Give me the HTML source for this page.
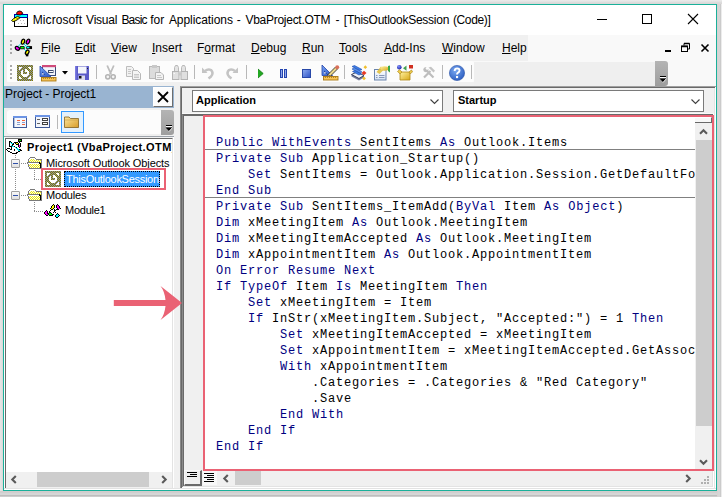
<!DOCTYPE html>
<html><head><meta charset="utf-8">
<style>
*{box-sizing:border-box}
html,body{margin:0;padding:0}
body{width:722px;height:497px;overflow:hidden;position:relative;background:#d9d9d9;font-family:"Liberation Sans",sans-serif;font-size:12px;color:#000}
.a{position:absolute}
svg.a{overflow:visible}
.t{position:absolute;white-space:pre;line-height:14px}
.u{text-decoration:underline;text-underline-offset:1px}
#code{position:absolute;left:205px;top:117px;width:490px;height:352px;overflow:hidden;background:#fff}
#code .ln{position:absolute;left:11px;margin-top:2px;white-space:pre;font-family:"Liberation Mono",monospace;font-size:12px;letter-spacing:0.8px;line-height:16px;height:16px;color:#000}
#code .k{color:#00007f}
.sep{position:absolute;left:0;width:490px;height:1px;background:#808080}
.dots{position:absolute;background-image:linear-gradient(#8c8c8c,#8c8c8c);}
</style></head>
<body>
<!-- shadow -->
<div class="a" style="left:0;top:0;width:722px;height:4px;background:linear-gradient(to bottom,#ebebeb,#e3e3e3 40%,#d9d9d9 75%,#ded8d8)"></div>
<div class="a" style="left:0;top:4px;width:3px;height:487px;background:linear-gradient(to right,#e6e6e6,#e1e1e1 50%,#dcd6d6)"></div>
<div class="a" style="left:717px;top:4px;width:5px;height:493px;background:linear-gradient(to right,#d8d2d2 0 1px,#d6d6d6 1px 3px,#cbcbcb 3px 4px,#ececec 4px)"></div>
<div class="a" style="left:0;top:491px;width:717px;height:6px;background:linear-gradient(to bottom,#d4cdcd 0 1px,#cfcfcf 1px 2px,#d6d6d6 2px 4px,#bebebe 4px 5px,#cdcdcd 5px)"></div>
<!-- window -->
<div class="a" style="left:3px;top:4px;width:714px;height:487px;border:1px solid #1ab09a;background:#f0f0f0"></div>
<!-- title bar -->
<div class="a" style="left:4px;top:5px;width:712px;height:30px;background:#fff"></div>
<svg class="a" style="left:11px;top:10px" width="18" height="18" viewBox="0 0 18 18">
  <rect x="3.5" y="4.5" width="13" height="12" fill="#fff" stroke="#000"/>
  <rect x="3.5" y="4.5" width="13" height="3" fill="#00ffff" stroke="#0000a0"/>
  <g fill="#b8b8b8"><rect x="9" y="10" width="1" height="1"/><rect x="12" y="10" width="1" height="1"/><rect x="7" y="13" width="1" height="1"/><rect x="10" y="13" width="1" height="1"/><rect x="13" y="13" width="1" height="1"/></g>
  <path d="M5.5 3.2 Q6 1.2 8.5 1 Q11 1 11.8 3.4 Q9.5 5.8 6.2 4.6Z" fill="#ff0000" stroke="#000" stroke-width="0.9"/>
  <path d="M0.6 10.6 L2.5 8.6 L6.5 6.4 L9.2 7.6 L5.5 10.4 L2 11.6 Z" fill="#ffff00" stroke="#000" stroke-width="0.9"/>
  <path d="M5.2 8.6 L7.8 7.4 L8.4 8.4 L5.6 10Z" fill="#808000"/>
</svg>
<div class="t" style="left:32.8px;top:13px;letter-spacing:0.07px">Microsoft</div><div class="t" style="left:86.1px;top:13px;letter-spacing:-0.24px">Visual</div><div class="t" style="left:121.4px;top:13px;letter-spacing:-0.8px">Basic</div><div class="t" style="left:150.2px;top:13px">for</div><div class="t" style="left:168.9px;top:13px;letter-spacing:-0.06px">Applications</div><div class="t" style="left:236.7px;top:13px">-</div><div class="t" style="left:245.5px;top:13px;letter-spacing:-0.28px">VbaProject.OTM</div><div class="t" style="left:335.5px;top:13px">-</div><div class="t" style="left:343.8px;top:13px;letter-spacing:-0.25px">[ThisOutlookSession</div><div class="t" style="left:452.9px;top:13px;letter-spacing:-0.35px">(Code)]</div>
<!-- window controls -->
<div class="a" style="left:597px;top:19px;width:10px;height:1px;background:#000"></div>
<div class="a" style="left:642px;top:14px;width:10px;height:10px;border:1px solid #000"></div>
<svg class="a" style="left:688px;top:14px" width="10" height="10"><path d="M0 0L10 10M10 0L0 10" stroke="#000" stroke-width="1.1"/></svg>

<!-- menu bar -->
<div class="a" style="left:4px;top:35px;width:712px;height:51px;background:#f9f9f9"></div>
<div class="a" style="left:4px;top:35px;width:524px;height:26px;background:#f0f0f0"></div>
<div class="a" style="left:4px;top:61px;width:3px;height:25px;background:#f0f0f0"></div>
<div class="a" style="left:4px;top:82px;width:472px;height:4px;background:#f0f0f0"></div>
<div class="a" style="left:10px;top:40px;width:2px;height:2px;background:#a8a8a8;box-shadow:0 4px #a8a8a8,0 8px #a8a8a8,0 12px #a8a8a8"></div>
<svg class="a" style="left:14px;top:38px" width="19" height="19" viewBox="0 0 19 19">
  <g stroke="#000" stroke-width="1.3">
  <ellipse cx="9" cy="3.7" rx="1.5" ry="2.6" transform="rotate(20 9 3.7)" fill="#ffff00"/>
  <ellipse cx="14" cy="3.7" rx="1.5" ry="2.6" transform="rotate(25 14 3.7)" fill="#ff00ff"/>
  <ellipse cx="3.4" cy="10.3" rx="2.3" ry="1.7" transform="rotate(35 3.4 10.3)" fill="#ff00ff"/>
  <rect x="6.6" y="8.4" width="3.6" height="2.4" fill="#00ff00" stroke-width="0.8"/>
  <path d="M12.4 8.4 H16.2 V10.6 H12.4Z" fill="#00ffff" stroke-width="0.8"/>
  <rect x="16.2" y="8.8" width="1.2" height="1.6" fill="#000"/>
  <ellipse cx="13.2" cy="14.3" rx="1.5" ry="2.4" transform="rotate(30 13.2 14.3)" fill="#ffff00"/>
  <rect x="12.5" y="16.5" width="1.2" height="1.2" fill="#000"/>
  </g>
  <g fill="#00e0e0">
  <rect x="4" y="7.5" width="1" height="1"/><rect x="5" y="6.5" width="1" height="1"/><rect x="6" y="5.5" width="1" height="1"/>
  <rect x="10" y="6" width="1" height="1"/><rect x="11" y="7" width="1" height="1"/><rect x="12" y="6" width="1" height="1"/><rect x="10" y="8" width="1" height="1"/><rect x="12" y="8" width="1" height="1"/>
  <rect x="10" y="11" width="1" height="1"/><rect x="11" y="12" width="1" height="1"/>
  </g>
</svg>
<div class="t" style="left:41px;top:41px"><span class="u">F</span>ile</div>
<div class="t" style="left:75px;top:41px"><span class="u">E</span>dit</div>
<div class="t" style="left:111px;top:41px"><span class="u">V</span>iew</div>
<div class="t" style="left:152px;top:41px"><span class="u">I</span>nsert</div>
<div class="t" style="left:197px;top:41px">F<span class="u">o</span>rmat</div>
<div class="t" style="left:251px;top:41px"><span class="u">D</span>ebug</div>
<div class="t" style="left:302px;top:41px"><span class="u">R</span>un</div>
<div class="t" style="left:339px;top:41px"><span class="u">T</span>ools</div>
<div class="t" style="left:384px;top:41px"><span class="u">A</span>dd-Ins</div>
<div class="t" style="left:442px;top:41px"><span class="u">W</span>indow</div>
<div class="t" style="left:502px;top:41px"><span class="u">H</span>elp</div>
<!-- mdi controls -->
<div class="a" style="left:665px;top:50px;width:6px;height:2px;background:#000"></div>
<svg class="a" style="left:681px;top:43px" width="9" height="9"><path d="M3 2.5V0.5H8.5V6H6.5" fill="none" stroke="#000" stroke-width="1"/><path d="M3 0.5H8.5" stroke="#000" stroke-width="1.5"/><rect x="0.5" y="3" width="6" height="5.5" fill="none" stroke="#000"/><path d="M0.5 3.5H6.5" stroke="#000" stroke-width="1.5"/></svg>
<svg class="a" style="left:701px;top:44px" width="8" height="8"><path d="M0.5 0.5L7.5 7.5M7.5 0.5L0.5 7.5" stroke="#000" stroke-width="1.6"/></svg>

<!-- main toolbar -->
<div class="a" style="left:7px;top:61px;width:467px;height:21px;background:#fcfcfc;border-radius:3px"></div>
<div class="a" style="left:474px;top:62px;width:186px;height:24px;background:#efefef;border-radius:0 4px 0 0"></div>
<div class="a" style="left:655px;top:61px;width:13px;height:25px;background:linear-gradient(#b4b4b4,#9e9e9e);border-radius:0 3px 3px 0"></div>
<div class="a" style="left:660px;top:76px;width:6px;height:1px;background:#000;box-shadow:0 1px #fff"></div>
<svg class="a" style="left:659px;top:78px" width="8" height="5"><path d="M0.5 0.5H7.5L4 4Z" fill="#000"/><path d="M7.5 0.5L4 4.5" stroke="#fff" stroke-width="0.8"/></svg>
<!-- grip -->
<div class="a" style="left:10px;top:65px;width:2px;height:2px;background:#a8a8a8;box-shadow:0 4px #a8a8a8,0 8px #a8a8a8,0 12px #a8a8a8"></div>
<!-- outlook icon -->
<svg class="a" style="left:17px;top:65px" width="16" height="16" viewBox="0 0 16 16" shape-rendering="crispEdges"><rect width="16" height="16" fill="#fff"/><path fill="#808000" d="M0 0h1v1h-1zM2 0h1v1h-1zM4 0h1v1h-1zM6 0h1v1h-1zM8 0h1v1h-1zM10 0h1v1h-1zM12 0h1v1h-1zM14 0h1v1h-1zM1 1h1v1h-1zM3 1h1v1h-1zM5 1h1v1h-1zM7 1h1v1h-1zM9 1h1v1h-1zM11 1h1v1h-1zM13 1h1v1h-1zM15 1h1v1h-1zM0 2h1v1h-1zM6 2h1v1h-1zM8 2h1v1h-1zM10 2h1v1h-1zM14 2h1v1h-1zM1 3h1v1h-1zM5 3h1v1h-1zM7 3h1v1h-1zM9 3h1v1h-1zM11 3h1v1h-1zM15 3h1v1h-1zM0 4h1v1h-1zM4 4h1v1h-1zM6 4h1v1h-1zM10 4h1v1h-1zM12 4h1v1h-1zM14 4h1v1h-1zM1 5h1v1h-1zM3 5h1v1h-1zM7 5h1v1h-1zM11 5h1v1h-1zM13 5h1v1h-1zM15 5h1v1h-1zM0 6h1v1h-1zM2 6h1v1h-1zM6 6h1v1h-1zM12 6h1v1h-1zM14 6h1v1h-1zM1 7h1v1h-1zM3 7h1v1h-1zM7 7h1v1h-1zM9 7h1v1h-1zM13 7h1v1h-1zM15 7h1v1h-1zM0 8h1v1h-1zM2 8h1v1h-1zM6 8h1v1h-1zM8 8h1v1h-1zM12 8h1v1h-1zM14 8h1v1h-1zM1 9h1v1h-1zM3 9h1v1h-1zM13 9h1v1h-1zM15 9h1v1h-1zM0 10h1v1h-1zM2 10h1v1h-1zM4 10h1v1h-1zM12 10h1v1h-1zM14 10h1v1h-1zM1 11h1v1h-1zM3 11h1v1h-1zM5 11h1v1h-1zM11 11h1v1h-1zM15 11h1v1h-1zM0 12h1v1h-1zM4 12h1v1h-1zM6 12h1v1h-1zM8 12h1v1h-1zM10 12h1v1h-1zM14 12h1v1h-1zM1 13h1v1h-1zM5 13h1v1h-1zM7 13h1v1h-1zM9 13h1v1h-1zM15 13h1v1h-1zM0 14h1v1h-1zM2 14h1v1h-1zM4 14h1v1h-1zM6 14h1v1h-1zM8 14h1v1h-1zM10 14h1v1h-1zM12 14h1v1h-1zM14 14h1v1h-1zM1 15h1v1h-1zM3 15h1v1h-1zM5 15h1v1h-1zM7 15h1v1h-1zM9 15h1v1h-1zM11 15h1v1h-1zM13 15h1v1h-1zM15 15h1v1h-1z"/><path fill="#8c8ca4" d="M1 0h1v1h-1zM3 0h1v1h-1zM5 0h1v1h-1zM7 0h1v1h-1zM9 0h1v1h-1zM11 0h1v1h-1zM13 0h1v1h-1zM15 0h1v1h-1zM0 1h1v1h-1zM2 1h1v1h-1zM4 1h1v1h-1zM6 1h1v1h-1zM8 1h1v1h-1zM10 1h1v1h-1zM12 1h1v1h-1zM14 1h1v1h-1zM1 2h1v1h-1zM5 2h1v1h-1zM7 2h1v1h-1zM9 2h1v1h-1zM15 2h1v1h-1zM0 3h1v1h-1zM4 3h1v1h-1zM6 3h1v1h-1zM8 3h1v1h-1zM10 3h1v1h-1zM14 3h1v1h-1zM1 4h1v1h-1zM3 4h1v1h-1zM5 4h1v1h-1zM7 4h1v1h-1zM11 4h1v1h-1zM15 4h1v1h-1zM0 5h1v1h-1zM2 5h1v1h-1zM4 5h1v1h-1zM6 5h1v1h-1zM12 5h1v1h-1zM14 5h1v1h-1zM1 6h1v1h-1zM3 6h1v1h-1zM7 6h1v1h-1zM13 6h1v1h-1zM15 6h1v1h-1zM0 7h1v1h-1zM2 7h1v1h-1zM6 7h1v1h-1zM8 7h1v1h-1zM12 7h1v1h-1zM14 7h1v1h-1zM1 8h1v1h-1zM3 8h1v1h-1zM7 8h1v1h-1zM9 8h1v1h-1zM13 8h1v1h-1zM15 8h1v1h-1zM0 9h1v1h-1zM2 9h1v1h-1zM12 9h1v1h-1zM14 9h1v1h-1zM1 10h1v1h-1zM3 10h1v1h-1zM11 10h1v1h-1zM13 10h1v1h-1zM15 10h1v1h-1zM0 11h1v1h-1zM4 11h1v1h-1zM10 11h1v1h-1zM12 11h1v1h-1zM14 11h1v1h-1zM1 12h1v1h-1zM5 12h1v1h-1zM7 12h1v1h-1zM9 12h1v1h-1zM11 12h1v1h-1zM15 12h1v1h-1zM0 13h1v1h-1zM6 13h1v1h-1zM8 13h1v1h-1zM10 13h1v1h-1zM14 13h1v1h-1zM1 14h1v1h-1zM3 14h1v1h-1zM5 14h1v1h-1zM7 14h1v1h-1zM9 14h1v1h-1zM11 14h1v1h-1zM13 14h1v1h-1zM15 14h1v1h-1zM0 15h1v1h-1zM2 15h1v1h-1zM4 15h1v1h-1zM6 15h1v1h-1zM8 15h1v1h-1zM10 15h1v1h-1zM12 15h1v1h-1zM14 15h1v1h-1z"/></svg>
<!-- userform icon -->
<svg class="a" style="left:38px;top:63px" width="20" height="20" viewBox="0 0 20 20">
  <defs><linearGradient id="sq" x1="0" y1="0" x2="1" y2="1"><stop offset="0" stop-color="#7aa4f4"/><stop offset="1" stop-color="#2a58c8"/></linearGradient></defs>
  <rect x="4.5" y="2.5" width="13" height="10" fill="#f2f5fc" stroke="#3c4c78"/>
  <rect x="4" y="2" width="14" height="2.2" fill="#d04a7a"/>
  <rect x="10.5" y="7.5" width="4.5" height="2" fill="#fff" stroke="#3c4a70"/>
  <path d="M2 3 V13.5 H13 Z" fill="url(#sq)" stroke="#2444a8" stroke-width="0.8"/>
  <path d="M4 8.5 V11.8 H7.3 Z" fill="#1c3c98"/>
  <circle cx="4.9" cy="10.9" r="0.8" fill="#fff"/>
  <rect x="3.5" y="14.5" width="14.5" height="3.5" fill="#f8c458" stroke="#a87812" stroke-width="0.9"/>
  <path d="M5.5 14.5v1.4M7.5 14.5v1.4M9.5 14.5v1.4M11.5 14.5v1.4M13.5 14.5v1.4M15.5 14.5v1.4" stroke="#a87812" stroke-width="0.9"/>
</svg>
<svg class="a" style="left:62px;top:71px" width="6" height="4"><path d="M0 0H6L3 3.5Z" fill="#000"/></svg>
<!-- save -->
<svg class="a" style="left:75px;top:66px" width="14" height="14" viewBox="0 0 14 14">
  <rect x="0" y="0" width="14" height="14" rx="0.5" fill="#5b5bc8"/>
  <rect x="0" y="0" width="1.5" height="14" fill="#7b7be0"/>
  <rect x="3" y="0.5" width="8.5" height="7" fill="#f4f6fb"/>
  <rect x="3.5" y="9.5" width="6.5" height="4.5" fill="#dcdcec"/>
  <rect x="4" y="10" width="2.5" height="2.5" fill="#111"/>
  <rect x="12" y="2" width="1" height="1" fill="#222"/>
</svg>
<div class="a" style="left:96px;top:65px;width:1px;height:14px;background:#b8b8b8"></div>
<!-- cut -->
<svg class="a" style="left:105px;top:65px" width="11" height="15" viewBox="0 0 11 15">
  <path d="M2.2 0.5 L6.2 9.5 M8.8 0.5 L4.8 9.5" stroke="#bdbdbd" stroke-width="1.8" fill="none"/>
  <circle cx="2.8" cy="11.8" r="2.1" fill="#f4f4f4" stroke="#b4b4b4" stroke-width="1.5"/>
  <circle cx="8.2" cy="11.8" r="2.1" fill="#f4f4f4" stroke="#b4b4b4" stroke-width="1.5"/>
</svg>
<!-- copy -->
<svg class="a" style="left:126px;top:66px" width="16" height="14" viewBox="0 0 16 14">
  <path d="M0.5 0.5H5.5L7.5 2.5V10.5H0.5Z" fill="#f2f2f2" stroke="#bdbdbd"/>
  <path d="M6.5 4.5H11.5L14.5 7.5V13.5H6.5Z" fill="#f4f4f4" stroke="#b8b8b8"/>
  <path d="M2 3.5H5M2 5.5H5M2 7.5H5M8 8.5H13M8 10H13M8 11.5H13" stroke="#c8c8c8"/>
</svg>
<!-- paste -->
<svg class="a" style="left:149px;top:65px" width="16" height="15" viewBox="0 0 16 15">
  <rect x="0.5" y="1.5" width="10" height="12" fill="#dcdcdc" stroke="#b8b8b8"/>
  <rect x="3" y="0" width="5" height="3" fill="#c8c8c8"/>
  <path d="M6.5 7.5H12L14.5 10V14.5H6.5Z" fill="#f2f2f2" stroke="#b4b4b4"/>
  <path d="M8 10.5H12M8 12.5H13" stroke="#c8c8c8"/>
</svg>
<!-- find -->
<svg class="a" style="left:172px;top:65px" width="16" height="15" viewBox="0 0 16 15">
  <path d="M2.5 2.5 L3.5 0.5 H5.5 L6.5 2.5 V6.5 H2.5Z" fill="#e4e4e4" stroke="#b8b8b8"/>
  <path d="M9.5 2.5 L10.5 0.5 H12.5 L13.5 2.5 V6.5 H9.5Z" fill="#e4e4e4" stroke="#b8b8b8"/>
  <rect x="0.5" y="6.5" width="6.5" height="8" fill="#e0e0e0" stroke="#b4b4b4"/>
  <rect x="9" y="6.5" width="6.5" height="8" fill="#e0e0e0" stroke="#b4b4b4"/>
  <rect x="7" y="7.5" width="2" height="3" fill="#c8c8c8"/>
  <path d="M1.5 8.5H3" stroke="#f8f8f8"/>
</svg>
<div class="a" style="left:194px;top:65px;width:1px;height:14px;background:#b8b8b8"></div>
<!-- undo / redo -->
<svg class="a" style="left:202px;top:67px" width="13" height="12" viewBox="0 0 13 12">
  <path d="M3 4 Q6 1.5 9 3 Q12 6 9 9.5 L6.5 11.5" fill="none" stroke="#c4c4c4" stroke-width="2.5"/>
  <path d="M0 0.5 V6 H5.5Z" fill="#c4c4c4"/>
</svg>
<svg class="a" style="left:225px;top:67px" width="13" height="12" viewBox="0 0 13 12">
  <path d="M10 4 Q7 1.5 4 3 Q1 6 4 9.5 L6.5 11.5" fill="none" stroke="#c4c4c4" stroke-width="2.5"/>
  <path d="M13 0.5 V6 H7.5Z" fill="#c4c4c4"/>
</svg>
<div class="a" style="left:246px;top:65px;width:1px;height:14px;background:#b8b8b8"></div>
<!-- run/break/reset -->
<svg class="a" style="left:258px;top:69px" width="6" height="9"><path d="M0 0L5.2 4.5L0 9Z" fill="#22a822"/><path d="M0 0L5.2 4.5L0 9" fill="none" stroke="#0c7a0c" stroke-width="0.8"/></svg>
<div class="a" style="left:280px;top:69px;width:3px;height:9px;background:linear-gradient(to right,#c0d0f8,#5c80e0);border:1px solid #2444b0"></div>
<div class="a" style="left:284px;top:69px;width:3px;height:9px;background:linear-gradient(to right,#c0d0f8,#5c80e0);border:1px solid #2444b0"></div>
<div class="a" style="left:302px;top:69px;width:9px;height:9px;background:linear-gradient(135deg,#8aa8ee,#3257c8);border:1px solid #2848a8"></div>
<!-- design mode -->
<svg class="a" style="left:318px;top:62px" width="24" height="22" viewBox="0 0 24 22">
  <path d="M4 3 V13.5 H14.5 Z" fill="url(#sq)" stroke="#2444a8" stroke-width="0.8"/>
  <path d="M6 8.5 V11.8 H9.3 Z" fill="#1c3c98"/>
  <circle cx="6.9" cy="10.9" r="0.8" fill="#fff"/>
  <path d="M10 12.5 L17.5 5 L19.5 7 L12 14.5 Z" fill="#ecd88a" stroke="#1a1a1a" stroke-width="0.8"/>
  <path d="M10 12.5 L12 14.5 L9.5 15Z" fill="#fff" stroke="#1a1a1a" stroke-width="0.6"/>
  <circle cx="19.2" cy="5.3" r="2" fill="#d8705a"/>
  <rect x="5.5" y="14.5" width="14.5" height="3.5" fill="#f8c458" stroke="#a87812" stroke-width="0.9"/>
  <path d="M7.5 14.5v1.4M9.5 14.5v1.4M11.5 14.5v1.4M13.5 14.5v1.4M15.5 14.5v1.4M17.5 14.5v1.4" stroke="#a87812" stroke-width="0.9"/>
</svg>
<div class="a" style="left:344px;top:65px;width:1px;height:14px;background:#b8b8b8"></div>
<!-- project explorer -->
<svg class="a" style="left:351px;top:65px" width="17" height="16" viewBox="0 0 17 16">
  <path d="M0.5 9.5 L0.5 11.5 L8 15.5 L13 12.5 L13 10.5 Z" fill="#7880a0"/>
  <path d="M0.5 9.5 L6 7 L13 10.5 L8 13.5 Z" fill="#eef1f8" stroke="#2c3450" stroke-width="0.9"/>
  <path d="M1 1.5 L3.5 0.5 L11 4.5 L8.5 5.5Z" fill="#3c7ce6" stroke="#1c4cb0" stroke-width="0.6"/>
  <path d="M1 4 L3.5 3 L11 7 L8.5 8Z" fill="#5a94f0" stroke="#1c4cb0" stroke-width="0.6"/>
  <path d="M1.5 6.5 L4 5.5 L10.5 9 L8 10Z" fill="#3c7ce6" stroke="#1c4cb0" stroke-width="0.6"/>
  <path d="M10.5 8 L13 5.8 L15.5 8 L13 10.2Z" fill="#e83a24"/>
  <path d="M12.5 2.2 L14.3 0.3 L16.2 2.2 L14.3 4.1Z" fill="#f0c030"/>
  <path d="M11.2 13.4 L13 11.5 L14.9 13.4 L13 15.3Z" fill="#f0c030"/>
</svg>
<!-- properties -->
<svg class="a" style="left:373px;top:65px" width="18" height="16" viewBox="0 0 18 16">
  <defs><linearGradient id="pw" x1="0" y1="0" x2="0" y2="1"><stop offset="0" stop-color="#ffffff"/><stop offset="1" stop-color="#d4e2f4"/></linearGradient>
  <linearGradient id="bx" x1="0" y1="0" x2="1" y2="1"><stop offset="0" stop-color="#fff2a0"/><stop offset="1" stop-color="#d8a818"/></linearGradient></defs>
  <rect x="1.5" y="4.5" width="11.5" height="10.5" fill="url(#pw)" stroke="#6a84ac"/>
  <path d="M3 10.5H4.5M6 10.5H11.5M3 12.5H4.5M6 12.5H11.5" stroke="#8898b8"/>
  <path d="M3.5 7 L8 1.5 L11 4.5 L6.5 9Z" fill="#e0c040" opacity="0.9"/>
  <ellipse cx="11.5" cy="3.5" rx="4" ry="2.2" fill="url(#bx)"/>
  <path d="M15 1 L17 0.5 V7.5 L15 6Z" fill="#38a848"/>
</svg>
<!-- object browser -->
<svg class="a" style="left:396px;top:64px" width="18" height="17" viewBox="0 0 18 17">
  <defs><radialGradient id="bb" cx="40%" cy="35%" r="70%"><stop offset="0" stop-color="#8090ff"/><stop offset="1" stop-color="#1820a0"/></radialGradient></defs>
  <circle cx="3.3" cy="3.2" r="2.3" fill="url(#bb)"/>
  <path d="M10.5 1.5 L7 4.2 L10.5 6.8Z" fill="#40a050"/>
  <rect x="13" y="1" width="4" height="3.5" fill="#d03020"/>
  <path d="M4 8 H14 V16 H4Z" fill="url(#bx)" stroke="#b08818" stroke-width="0.8"/>
  <path d="M1.5 7.5 L3.5 5.8 L6 8 L4 9.8Z" fill="#f0d050" stroke="#b08818" stroke-width="0.7"/>
  <path d="M13 8 L15.5 6 L16.5 8 L14 9.8Z" fill="#f0d050" stroke="#b08818" stroke-width="0.7"/>
</svg>
<!-- toolbox disabled -->
<svg class="a" style="left:422px;top:66px" width="14" height="13" viewBox="0 0 14 13">
  <path d="M2 11.5 L8.5 5 M11.5 11.5 L5 5" stroke="#bdbdbd" stroke-width="2.2"/>
  <path d="M1.2 3.5 Q1.5 0.8 4.5 1 L3.5 2.5 L5 4 L6.5 3 Q6.8 6 3.8 6.2 Q1.3 6 1.2 3.5Z" fill="#bdbdbd"/>
  <path d="M6.5 1.5 L9 0.8 L13 4.8 L11.5 6.5 L9.5 4.5 Z" fill="#c4c4c4"/>
</svg>
<div class="a" style="left:442px;top:65px;width:1px;height:14px;background:#b8b8b8"></div>
<!-- help -->
<svg class="a" style="left:449px;top:65px" width="16" height="16" viewBox="0 0 16 16">
  <defs><radialGradient id="hg" cx="40%" cy="35%" r="70%"><stop offset="0" stop-color="#7aa8f0"/><stop offset="1" stop-color="#2a5cc0"/></radialGradient></defs>
  <circle cx="8" cy="8" r="7.6" fill="url(#hg)" stroke="#2c54a8" stroke-width="0.6"/>
  <path d="M5.6 6 Q5.8 3.4 8.2 3.4 Q10.6 3.5 10.5 5.6 Q10.4 7 8.8 7.8 Q8 8.3 8 9.6" fill="none" stroke="#fff" stroke-width="1.9"/>
  <rect x="7" y="11" width="2.1" height="2.1" fill="#fff"/>
</svg>
<div class="a" style="left:471px;top:65px;width:1px;height:14px;background:#b8b8b8"></div>

<!-- project pane -->
<div class="a" style="left:4px;top:86px;width:170px;height:22px;background:#99b4d1"></div>
<div class="t" style="left:5px;top:87px;letter-spacing:-0.05px">Project - Project1</div>
<div class="a" style="left:153px;top:87px;width:20px;height:20px;background:#fcfcfc;border:1px solid;border-color:#fff #6e6e6e #6e6e6e #fff"></div>
<svg class="a" style="left:157px;top:91px" width="12" height="12"><path d="M1 1L11 11M11 1L1 11" stroke="#000" stroke-width="1.8"/></svg>
<div class="a" style="left:7px;top:110px;width:155px;height:24px;background:#fcfcfc;border-radius:3px"></div>
<div class="a" style="left:161px;top:110px;width:13px;height:25px;background:linear-gradient(#b4b4b4,#9e9e9e);border-radius:0 3px 3px 0"></div>
<div class="a" style="left:166px;top:125px;width:6px;height:1px;background:#000;box-shadow:0 1px #fff"></div>
<svg class="a" style="left:165px;top:127px" width="8" height="5"><path d="M0.5 0.5H7.5L4 4Z" fill="#000"/><path d="M7.5 0.5L4 4.5" stroke="#fff" stroke-width="0.8"/></svg>
<!-- view code / view object / folder -->
<svg class="a" style="left:13px;top:116px" width="14" height="12" viewBox="0 0 14 12" shape-rendering="crispEdges">
  <rect x="0" y="0" width="14" height="12" fill="#3e5a98"/>
  <rect x="1" y="2" width="12" height="9" fill="#f4f7fd"/>
  <rect x="0" y="0" width="14" height="2" fill="#6c94e4"/>
  <rect x="1" y="2" width="1" height="9" fill="#b8c4dc"/>
  <rect x="4" y="4" width="3" height="1" fill="#f0643c"/><rect x="9" y="4" width="3" height="1" fill="#f0643c"/>
  <rect x="4" y="6" width="3" height="1" fill="#8aa0cc"/><rect x="9" y="6" width="3" height="1" fill="#8aa0cc"/>
  <rect x="4" y="8" width="3" height="1" fill="#8aa0cc"/><rect x="9" y="8" width="3" height="1" fill="#f0643c"/>
</svg>
<svg class="a" style="left:35px;top:115px" width="15" height="13" viewBox="0 0 15 13" shape-rendering="crispEdges">
  <rect x="0" y="0" width="15" height="13" fill="#3e5a98"/>
  <rect x="1" y="2" width="13" height="10" fill="#f2f5fb"/>
  <rect x="0" y="0" width="15" height="2" fill="#6c94e4"/>
  <rect x="2" y="4" width="3" height="1" fill="#606060"/><rect x="2" y="8" width="3" height="1" fill="#606060"/>
  <rect x="7" y="3" width="6" height="3" fill="#404040"/><rect x="8" y="4" width="4" height="1" fill="#fff"/>
  <rect x="7" y="7" width="6" height="3" fill="#404040"/><rect x="8" y="8" width="4" height="1" fill="#fff"/>
</svg>
<div class="a" style="left:57px;top:115px;width:1px;height:14px;background:#b8b8b8"></div>
<div class="a" style="left:61px;top:111px;width:23px;height:22px;background:#e5f1fb;border:1px solid #3399ff"></div>
<svg class="a" style="left:64px;top:116px" width="15" height="12" viewBox="0 0 15 12">
  <defs><linearGradient id="fg" x1="0" y1="0" x2="1" y2="1"><stop offset="0" stop-color="#fbe7a0"/><stop offset="1" stop-color="#d89c28"/></linearGradient></defs>
  <path d="M0.5 1 H5 L6.5 2.5 H14.5 V11.5 H0.5Z" fill="url(#fg)" stroke="#806020" stroke-width="0.8"/>
  <path d="M0.5 4 H14.5" stroke="#c89a40" stroke-width="0.6"/>
</svg>
<div class="a" style="left:4px;top:136px;width:170px;height:1px;background:#9ea4ac"></div>

<!-- tree -->
<div class="a" style="left:5px;top:138px;width:168px;height:351px;background:#fff;border-top:1px solid #6a6a6a;border-left:1px solid #696969;border-right:1px solid #e3e3e3;border-bottom:1px solid #f0f0f0"></div>
<!-- project icon -->
<svg class="a" style="left:6px;top:138px" width="17" height="16" viewBox="0 0 17 16" shape-rendering="crispEdges"><path fill="#000000" d="M12 1h1v1h-1zM13 1h1v1h-1zM14 1h1v1h-1zM15 1h1v1h-1zM12 2h1v1h-1zM15 2h1v1h-1zM3 3h1v1h-1zM4 3h1v1h-1zM12 3h1v1h-1zM13 3h1v1h-1zM14 3h1v1h-1zM15 3h1v1h-1zM3 4h1v1h-1zM5 4h1v1h-1zM8 4h1v1h-1zM9 4h1v1h-1zM10 4h1v1h-1zM11 4h1v1h-1zM13 4h1v1h-1zM3 5h1v1h-1zM7 5h1v1h-1zM9 5h1v1h-1zM12 5h1v1h-1zM14 5h1v1h-1zM3 6h1v1h-1zM6 6h1v1h-1zM7 6h1v1h-1zM10 6h1v1h-1zM11 6h1v1h-1zM12 6h1v1h-1zM14 6h1v1h-1zM3 7h1v1h-1zM6 7h1v1h-1zM12 7h1v1h-1zM14 7h1v1h-1zM3 8h1v1h-1zM4 8h1v1h-1zM5 8h1v1h-1zM8 8h1v1h-1zM12 8h1v1h-1zM14 8h1v1h-1zM5 9h1v1h-1zM10 9h1v1h-1zM13 9h1v1h-1zM1 10h1v1h-1zM2 10h1v1h-1zM3 10h1v1h-1zM5 10h1v1h-1zM0 11h1v1h-1zM4 11h1v1h-1zM5 11h1v1h-1zM8 11h1v1h-1zM13 11h1v1h-1zM14 11h1v1h-1zM1 12h1v1h-1zM8 12h1v1h-1zM14 12h1v1h-1zM15 12h1v1h-1zM2 13h1v1h-1zM3 13h1v1h-1zM12 13h1v1h-1zM13 13h1v1h-1zM4 14h1v1h-1zM5 14h1v1h-1zM10 14h1v1h-1zM11 14h1v1h-1zM6 15h1v1h-1zM7 15h1v1h-1zM8 15h1v1h-1zM9 15h1v1h-1zM10 15h1v1h-1z"/><path fill="#00d000" d="M13 2h1v1h-1zM14 2h1v1h-1z"/><path fill="#00e8f0" d="M4 4h1v1h-1zM5 5h1v1h-1zM6 5h1v1h-1zM5 7h1v1h-1zM6 8h1v1h-1zM7 8h1v1h-1zM9 9h1v1h-1zM10 10h1v1h-1zM11 10h1v1h-1zM11 11h1v1h-1zM12 11h1v1h-1zM12 12h1v1h-1zM13 12h1v1h-1z"/><path fill="#ffff00" d="M10 5h1v1h-1zM11 5h1v1h-1z"/><path fill="#ffffff" d="M4 6h1v1h-1zM5 6h1v1h-1zM4 7h1v1h-1zM6 9h1v1h-1zM7 9h1v1h-1zM8 9h1v1h-1zM6 10h1v1h-1zM7 10h1v1h-1zM8 10h1v1h-1zM9 10h1v1h-1zM6 11h1v1h-1zM7 11h1v1h-1zM9 11h1v1h-1zM10 11h1v1h-1zM7 12h1v1h-1zM9 12h1v1h-1z"/><path fill="#ff00ff" d="M13 7h1v1h-1zM13 8h1v1h-1z"/></svg>
<div class="a" style="left:6px;top:139px;width:166px;height:333px;overflow:hidden"><div class="t" style="left:21px;top:1px;font-size:11px;font-weight:bold;letter-spacing:0.4px">Project1 (VbaProject.OTM)</div><div class="t" style="left:40px;top:17px;font-size:11px;letter-spacing:-0.1px">Microsoft Outlook Objects</div></div>
<!-- dotted lines -->
<div class="a" style="left:15px;top:155px;width:1px;height:4px;background:repeating-linear-gradient(#8c8c8c 0 1px,transparent 1px 2px)"></div>
<div class="a" style="left:15px;top:169px;width:1px;height:22px;background:repeating-linear-gradient(#8c8c8c 0 1px,transparent 1px 2px)"></div>
<div class="a" style="left:21px;top:163px;width:6px;height:1px;background:repeating-linear-gradient(to right,#8c8c8c 0 1px,transparent 1px 2px)"></div>
<div class="a" style="left:21px;top:195px;width:6px;height:1px;background:repeating-linear-gradient(to right,#8c8c8c 0 1px,transparent 1px 2px)"></div>
<div class="a" style="left:34px;top:170px;width:1px;height:9px;background:repeating-linear-gradient(#8c8c8c 0 1px,transparent 1px 2px)"></div>
<div class="a" style="left:34px;top:179px;width:10px;height:1px;background:repeating-linear-gradient(to right,#8c8c8c 0 1px,transparent 1px 2px)"></div>
<div class="a" style="left:34px;top:202px;width:1px;height:9px;background:repeating-linear-gradient(#8c8c8c 0 1px,transparent 1px 2px)"></div>
<div class="a" style="left:34px;top:211px;width:10px;height:1px;background:repeating-linear-gradient(to right,#8c8c8c 0 1px,transparent 1px 2px)"></div>
<!-- minus boxes -->
<div class="a" style="left:11px;top:159px;width:9px;height:9px;border:1px solid #a0a0a0;border-radius:1px;background:linear-gradient(#f8f8f8,#e0e0e0)"></div>
<div class="a" style="left:13px;top:163px;width:5px;height:1px;background:#3050a8"></div>
<div class="a" style="left:11px;top:191px;width:9px;height:9px;border:1px solid #a0a0a0;border-radius:1px;background:linear-gradient(#f8f8f8,#e0e0e0)"></div>
<div class="a" style="left:13px;top:195px;width:5px;height:1px;background:#3050a8"></div>
<!-- folders -->
<svg class="a" style="left:27px;top:157px" width="15" height="12" viewBox="0 0 15 12" shape-rendering="crispEdges"><path fill="#7a7a7a" d="M3 0h1v1h-1zM4 0h1v1h-1zM5 0h1v1h-1zM6 0h1v1h-1zM7 0h1v1h-1zM2 1h1v1h-1zM8 1h1v1h-1zM1 2h1v1h-1zM9 2h1v1h-1zM10 2h1v1h-1zM11 2h1v1h-1zM12 2h1v1h-1zM13 2h1v1h-1zM14 2h1v1h-1zM1 3h1v1h-1zM14 3h1v1h-1zM1 4h1v1h-1zM14 4h1v1h-1zM0 5h1v1h-1zM1 5h1v1h-1zM2 5h1v1h-1zM3 5h1v1h-1zM4 5h1v1h-1zM5 5h1v1h-1zM6 5h1v1h-1zM7 5h1v1h-1zM8 5h1v1h-1zM9 5h1v1h-1zM10 5h1v1h-1zM11 5h1v1h-1zM14 5h1v1h-1zM0 6h1v1h-1zM14 6h1v1h-1zM1 7h1v1h-1zM14 7h1v1h-1zM1 8h1v1h-1zM14 8h1v1h-1zM1 9h1v1h-1zM14 9h1v1h-1zM2 10h1v1h-1zM14 10h1v1h-1zM2 11h1v1h-1zM3 11h1v1h-1zM4 11h1v1h-1zM5 11h1v1h-1zM6 11h1v1h-1zM7 11h1v1h-1zM8 11h1v1h-1zM9 11h1v1h-1zM10 11h1v1h-1zM11 11h1v1h-1zM12 11h1v1h-1zM13 11h1v1h-1zM14 11h1v1h-1z"/><path fill="#ffffff" d="M3 1h1v1h-1zM4 1h1v1h-1zM5 1h1v1h-1zM6 1h1v1h-1zM7 1h1v1h-1zM2 2h1v1h-1zM8 2h1v1h-1zM1 6h1v1h-1zM2 6h1v1h-1zM3 6h1v1h-1zM4 6h1v1h-1zM5 6h1v1h-1zM6 6h1v1h-1zM7 6h1v1h-1zM8 6h1v1h-1zM9 6h1v1h-1zM10 6h1v1h-1zM11 6h1v1h-1z"/><path fill="#f4f4f8" d="M3 2h1v1h-1zM5 2h1v1h-1zM7 2h1v1h-1zM2 3h1v1h-1zM4 3h1v1h-1zM6 3h1v1h-1zM8 3h1v1h-1zM10 3h1v1h-1zM12 3h1v1h-1zM3 4h1v1h-1zM5 4h1v1h-1zM7 4h1v1h-1zM9 4h1v1h-1zM11 4h1v1h-1zM13 4h1v1h-1zM2 7h1v1h-1zM4 7h1v1h-1zM6 7h1v1h-1zM8 7h1v1h-1zM10 7h1v1h-1zM12 7h1v1h-1zM3 8h1v1h-1zM5 8h1v1h-1zM7 8h1v1h-1zM9 8h1v1h-1zM11 8h1v1h-1zM2 9h1v1h-1zM4 9h1v1h-1zM6 9h1v1h-1zM8 9h1v1h-1zM10 9h1v1h-1zM12 9h1v1h-1zM3 10h1v1h-1zM5 10h1v1h-1zM7 10h1v1h-1zM9 10h1v1h-1zM11 10h1v1h-1z"/><path fill="#f0f000" d="M4 2h1v1h-1zM6 2h1v1h-1zM3 3h1v1h-1zM5 3h1v1h-1zM7 3h1v1h-1zM9 3h1v1h-1zM11 3h1v1h-1zM13 3h1v1h-1zM2 4h1v1h-1zM4 4h1v1h-1zM6 4h1v1h-1zM8 4h1v1h-1zM10 4h1v1h-1zM12 4h1v1h-1zM13 5h1v1h-1zM3 7h1v1h-1zM5 7h1v1h-1zM7 7h1v1h-1zM9 7h1v1h-1zM11 7h1v1h-1zM2 8h1v1h-1zM4 8h1v1h-1zM6 8h1v1h-1zM8 8h1v1h-1zM10 8h1v1h-1zM12 8h1v1h-1zM3 9h1v1h-1zM5 9h1v1h-1zM7 9h1v1h-1zM9 9h1v1h-1zM11 9h1v1h-1zM4 10h1v1h-1zM6 10h1v1h-1zM8 10h1v1h-1zM10 10h1v1h-1zM12 10h1v1h-1z"/><path fill="#000000" d="M12 5h1v1h-1zM12 6h1v1h-1zM13 6h1v1h-1zM13 7h1v1h-1zM13 8h1v1h-1zM13 9h1v1h-1zM13 10h1v1h-1z"/></svg>
<svg class="a" style="left:45px;top:171px" width="16" height="16" viewBox="0 0 16 16" shape-rendering="crispEdges"><rect width="16" height="16" fill="#fff"/><path fill="#808000" d="M0 0h1v1h-1zM2 0h1v1h-1zM4 0h1v1h-1zM6 0h1v1h-1zM8 0h1v1h-1zM10 0h1v1h-1zM12 0h1v1h-1zM14 0h1v1h-1zM1 1h1v1h-1zM3 1h1v1h-1zM5 1h1v1h-1zM7 1h1v1h-1zM9 1h1v1h-1zM11 1h1v1h-1zM13 1h1v1h-1zM15 1h1v1h-1zM0 2h1v1h-1zM6 2h1v1h-1zM8 2h1v1h-1zM10 2h1v1h-1zM14 2h1v1h-1zM1 3h1v1h-1zM5 3h1v1h-1zM7 3h1v1h-1zM9 3h1v1h-1zM11 3h1v1h-1zM15 3h1v1h-1zM0 4h1v1h-1zM4 4h1v1h-1zM6 4h1v1h-1zM10 4h1v1h-1zM12 4h1v1h-1zM14 4h1v1h-1zM1 5h1v1h-1zM3 5h1v1h-1zM7 5h1v1h-1zM11 5h1v1h-1zM13 5h1v1h-1zM15 5h1v1h-1zM0 6h1v1h-1zM2 6h1v1h-1zM6 6h1v1h-1zM12 6h1v1h-1zM14 6h1v1h-1zM1 7h1v1h-1zM3 7h1v1h-1zM7 7h1v1h-1zM9 7h1v1h-1zM13 7h1v1h-1zM15 7h1v1h-1zM0 8h1v1h-1zM2 8h1v1h-1zM6 8h1v1h-1zM8 8h1v1h-1zM12 8h1v1h-1zM14 8h1v1h-1zM1 9h1v1h-1zM3 9h1v1h-1zM13 9h1v1h-1zM15 9h1v1h-1zM0 10h1v1h-1zM2 10h1v1h-1zM4 10h1v1h-1zM12 10h1v1h-1zM14 10h1v1h-1zM1 11h1v1h-1zM3 11h1v1h-1zM5 11h1v1h-1zM11 11h1v1h-1zM15 11h1v1h-1zM0 12h1v1h-1zM4 12h1v1h-1zM6 12h1v1h-1zM8 12h1v1h-1zM10 12h1v1h-1zM14 12h1v1h-1zM1 13h1v1h-1zM5 13h1v1h-1zM7 13h1v1h-1zM9 13h1v1h-1zM15 13h1v1h-1zM0 14h1v1h-1zM2 14h1v1h-1zM4 14h1v1h-1zM6 14h1v1h-1zM8 14h1v1h-1zM10 14h1v1h-1zM12 14h1v1h-1zM14 14h1v1h-1zM1 15h1v1h-1zM3 15h1v1h-1zM5 15h1v1h-1zM7 15h1v1h-1zM9 15h1v1h-1zM11 15h1v1h-1zM13 15h1v1h-1zM15 15h1v1h-1z"/><path fill="#8c8ca4" d="M1 0h1v1h-1zM3 0h1v1h-1zM5 0h1v1h-1zM7 0h1v1h-1zM9 0h1v1h-1zM11 0h1v1h-1zM13 0h1v1h-1zM15 0h1v1h-1zM0 1h1v1h-1zM2 1h1v1h-1zM4 1h1v1h-1zM6 1h1v1h-1zM8 1h1v1h-1zM10 1h1v1h-1zM12 1h1v1h-1zM14 1h1v1h-1zM1 2h1v1h-1zM5 2h1v1h-1zM7 2h1v1h-1zM9 2h1v1h-1zM15 2h1v1h-1zM0 3h1v1h-1zM4 3h1v1h-1zM6 3h1v1h-1zM8 3h1v1h-1zM10 3h1v1h-1zM14 3h1v1h-1zM1 4h1v1h-1zM3 4h1v1h-1zM5 4h1v1h-1zM7 4h1v1h-1zM11 4h1v1h-1zM15 4h1v1h-1zM0 5h1v1h-1zM2 5h1v1h-1zM4 5h1v1h-1zM6 5h1v1h-1zM12 5h1v1h-1zM14 5h1v1h-1zM1 6h1v1h-1zM3 6h1v1h-1zM7 6h1v1h-1zM13 6h1v1h-1zM15 6h1v1h-1zM0 7h1v1h-1zM2 7h1v1h-1zM6 7h1v1h-1zM8 7h1v1h-1zM12 7h1v1h-1zM14 7h1v1h-1zM1 8h1v1h-1zM3 8h1v1h-1zM7 8h1v1h-1zM9 8h1v1h-1zM13 8h1v1h-1zM15 8h1v1h-1zM0 9h1v1h-1zM2 9h1v1h-1zM12 9h1v1h-1zM14 9h1v1h-1zM1 10h1v1h-1zM3 10h1v1h-1zM11 10h1v1h-1zM13 10h1v1h-1zM15 10h1v1h-1zM0 11h1v1h-1zM4 11h1v1h-1zM10 11h1v1h-1zM12 11h1v1h-1zM14 11h1v1h-1zM1 12h1v1h-1zM5 12h1v1h-1zM7 12h1v1h-1zM9 12h1v1h-1zM11 12h1v1h-1zM15 12h1v1h-1zM0 13h1v1h-1zM6 13h1v1h-1zM8 13h1v1h-1zM10 13h1v1h-1zM14 13h1v1h-1zM1 14h1v1h-1zM3 14h1v1h-1zM5 14h1v1h-1zM7 14h1v1h-1zM9 14h1v1h-1zM11 14h1v1h-1zM13 14h1v1h-1zM15 14h1v1h-1zM0 15h1v1h-1zM2 15h1v1h-1zM4 15h1v1h-1zM6 15h1v1h-1zM8 15h1v1h-1zM10 15h1v1h-1zM12 15h1v1h-1zM14 15h1v1h-1z"/></svg>
<div class="a" style="left:64px;top:171px;width:96px;height:16px;background:#3399ff;outline:1px dotted #000;outline-offset:-1px"></div>
<div class="t" style="left:66px;top:172px;color:#fff;font-size:11px;letter-spacing:-0.28px">ThisOutlookSession</div>
<div class="a" style="left:41px;top:168px;width:125px;height:22px;border:2px solid #ea6274"></div>
<svg class="a" style="left:27px;top:189px" width="15" height="12" viewBox="0 0 15 12" shape-rendering="crispEdges"><path fill="#7a7a7a" d="M3 0h1v1h-1zM4 0h1v1h-1zM5 0h1v1h-1zM6 0h1v1h-1zM7 0h1v1h-1zM2 1h1v1h-1zM8 1h1v1h-1zM1 2h1v1h-1zM9 2h1v1h-1zM10 2h1v1h-1zM11 2h1v1h-1zM12 2h1v1h-1zM13 2h1v1h-1zM14 2h1v1h-1zM1 3h1v1h-1zM14 3h1v1h-1zM1 4h1v1h-1zM14 4h1v1h-1zM0 5h1v1h-1zM1 5h1v1h-1zM2 5h1v1h-1zM3 5h1v1h-1zM4 5h1v1h-1zM5 5h1v1h-1zM6 5h1v1h-1zM7 5h1v1h-1zM8 5h1v1h-1zM9 5h1v1h-1zM10 5h1v1h-1zM11 5h1v1h-1zM14 5h1v1h-1zM0 6h1v1h-1zM14 6h1v1h-1zM1 7h1v1h-1zM14 7h1v1h-1zM1 8h1v1h-1zM14 8h1v1h-1zM1 9h1v1h-1zM14 9h1v1h-1zM2 10h1v1h-1zM14 10h1v1h-1zM2 11h1v1h-1zM3 11h1v1h-1zM4 11h1v1h-1zM5 11h1v1h-1zM6 11h1v1h-1zM7 11h1v1h-1zM8 11h1v1h-1zM9 11h1v1h-1zM10 11h1v1h-1zM11 11h1v1h-1zM12 11h1v1h-1zM13 11h1v1h-1zM14 11h1v1h-1z"/><path fill="#ffffff" d="M3 1h1v1h-1zM4 1h1v1h-1zM5 1h1v1h-1zM6 1h1v1h-1zM7 1h1v1h-1zM2 2h1v1h-1zM8 2h1v1h-1zM1 6h1v1h-1zM2 6h1v1h-1zM3 6h1v1h-1zM4 6h1v1h-1zM5 6h1v1h-1zM6 6h1v1h-1zM7 6h1v1h-1zM8 6h1v1h-1zM9 6h1v1h-1zM10 6h1v1h-1zM11 6h1v1h-1z"/><path fill="#f4f4f8" d="M3 2h1v1h-1zM5 2h1v1h-1zM7 2h1v1h-1zM2 3h1v1h-1zM4 3h1v1h-1zM6 3h1v1h-1zM8 3h1v1h-1zM10 3h1v1h-1zM12 3h1v1h-1zM3 4h1v1h-1zM5 4h1v1h-1zM7 4h1v1h-1zM9 4h1v1h-1zM11 4h1v1h-1zM13 4h1v1h-1zM2 7h1v1h-1zM4 7h1v1h-1zM6 7h1v1h-1zM8 7h1v1h-1zM10 7h1v1h-1zM12 7h1v1h-1zM3 8h1v1h-1zM5 8h1v1h-1zM7 8h1v1h-1zM9 8h1v1h-1zM11 8h1v1h-1zM2 9h1v1h-1zM4 9h1v1h-1zM6 9h1v1h-1zM8 9h1v1h-1zM10 9h1v1h-1zM12 9h1v1h-1zM3 10h1v1h-1zM5 10h1v1h-1zM7 10h1v1h-1zM9 10h1v1h-1zM11 10h1v1h-1z"/><path fill="#f0f000" d="M4 2h1v1h-1zM6 2h1v1h-1zM3 3h1v1h-1zM5 3h1v1h-1zM7 3h1v1h-1zM9 3h1v1h-1zM11 3h1v1h-1zM13 3h1v1h-1zM2 4h1v1h-1zM4 4h1v1h-1zM6 4h1v1h-1zM8 4h1v1h-1zM10 4h1v1h-1zM12 4h1v1h-1zM13 5h1v1h-1zM3 7h1v1h-1zM5 7h1v1h-1zM7 7h1v1h-1zM9 7h1v1h-1zM11 7h1v1h-1zM2 8h1v1h-1zM4 8h1v1h-1zM6 8h1v1h-1zM8 8h1v1h-1zM10 8h1v1h-1zM12 8h1v1h-1zM3 9h1v1h-1zM5 9h1v1h-1zM7 9h1v1h-1zM9 9h1v1h-1zM11 9h1v1h-1zM4 10h1v1h-1zM6 10h1v1h-1zM8 10h1v1h-1zM10 10h1v1h-1zM12 10h1v1h-1z"/><path fill="#000000" d="M12 5h1v1h-1zM12 6h1v1h-1zM13 6h1v1h-1zM13 7h1v1h-1zM13 8h1v1h-1zM13 9h1v1h-1zM13 10h1v1h-1z"/></svg>
<div class="t" style="left:46px;top:188px;font-size:11px;letter-spacing:-0.2px">Modules</div>
<svg class="a" style="left:44px;top:203px" width="17" height="15" viewBox="0 0 17 15" shape-rendering="crispEdges"><path fill="#000000" d="M9 1h1v1h-1zM13 1h1v1h-1zM8 2h1v1h-1zM10 2h1v1h-1zM12 2h1v1h-1zM14 2h1v1h-1zM7 3h1v1h-1zM10 3h1v1h-1zM12 3h1v1h-1zM15 3h1v1h-1zM7 4h1v1h-1zM10 4h1v1h-1zM12 4h1v1h-1zM15 4h1v1h-1zM6 5h1v1h-1zM9 5h1v1h-1zM13 5h1v1h-1zM16 5h1v1h-1zM7 6h1v1h-1zM8 6h1v1h-1zM10 6h1v1h-1zM12 6h1v1h-1zM13 6h1v1h-1zM14 6h1v1h-1zM2 7h1v1h-1zM6 7h1v1h-1zM10 7h1v1h-1zM11 7h1v1h-1zM1 8h1v1h-1zM3 8h1v1h-1zM5 8h1v1h-1zM10 8h1v1h-1zM0 9h1v1h-1zM3 9h1v1h-1zM5 9h1v1h-1zM6 9h1v1h-1zM9 9h1v1h-1zM11 9h1v1h-1zM0 10h1v1h-1zM3 10h1v1h-1zM4 10h1v1h-1zM7 10h1v1h-1zM13 10h1v1h-1zM1 11h1v1h-1zM4 11h1v1h-1zM8 11h1v1h-1zM9 11h1v1h-1zM12 11h1v1h-1zM14 11h1v1h-1zM2 12h1v1h-1zM3 12h1v1h-1zM5 12h1v1h-1zM6 12h1v1h-1zM7 12h1v1h-1zM8 12h1v1h-1zM11 12h1v1h-1zM15 12h1v1h-1zM11 13h1v1h-1zM14 13h1v1h-1zM12 14h1v1h-1zM13 14h1v1h-1z"/><path fill="#ffff00" d="M9 2h1v1h-1zM8 3h1v1h-1zM9 3h1v1h-1zM8 4h1v1h-1zM9 4h1v1h-1zM7 5h1v1h-1zM8 5h1v1h-1z"/><path fill="#ff00ff" d="M13 2h1v1h-1zM13 3h1v1h-1zM14 3h1v1h-1zM13 4h1v1h-1zM14 4h1v1h-1zM14 5h1v1h-1zM15 5h1v1h-1zM2 8h1v1h-1zM1 9h1v1h-1zM2 9h1v1h-1zM1 10h1v1h-1zM2 10h1v1h-1zM2 11h1v1h-1zM3 11h1v1h-1z"/><path fill="#00ff00" d="M5 10h1v1h-1zM6 10h1v1h-1zM5 11h1v1h-1zM6 11h1v1h-1zM7 11h1v1h-1z"/><path fill="#00ffff" d="M13 11h1v1h-1zM12 12h1v1h-1zM13 12h1v1h-1zM14 12h1v1h-1zM12 13h1v1h-1zM13 13h1v1h-1z"/></svg>
<div class="t" style="left:65px;top:203px;font-size:11px;letter-spacing:-0.25px">Module1</div>
<div class="a" style="left:173px;top:137px;width:1px;height:352px;background:#fff"></div>
<div class="a" style="left:4px;top:137px;width:1px;height:352px;background:#fff"></div>
<!-- tree hscroll -->
<div class="a" style="left:6px;top:472px;width:166px;height:16px;background:#f0f0f0"></div>
<div class="a" style="left:37px;top:472px;width:112px;height:15px;background:#cdcdcd"></div>

<!-- MDI child -->
<div class="a" style="left:180px;top:86px;width:536px;height:403px;background:#f0f0f0;border-left:1px solid #8a8a8a;border-top:1px solid #a0a0a0"></div>
<div class="a" style="left:181px;top:87px;width:1px;height:401px;background:#696969"></div>
<div class="a" style="left:181px;top:87px;width:535px;height:1px;background:#696969"></div>
<div class="a" style="left:192px;top:90px;width:251px;height:22px;background:#fff;border:1px solid #7a7a7a"></div>
<div class="t" style="left:196px;top:93px;font-size:11px;font-weight:bold">Application</div>
<svg class="a" style="left:430px;top:99px" width="9" height="6"><path d="M0.5 0.5 L4.5 4.5 L8.5 0.5" fill="none" stroke="#404040" stroke-width="1.1"/></svg>
<div class="a" style="left:453px;top:90px;width:251px;height:22px;background:#fff;border:1px solid #7a7a7a"></div>
<div class="t" style="left:458px;top:93px;font-size:11px;font-weight:bold">Startup</div>
<svg class="a" style="left:691px;top:99px" width="9" height="6"><path d="M0.5 0.5 L4.5 4.5 L8.5 0.5" fill="none" stroke="#404040" stroke-width="1.1"/></svg>

<!-- code area -->
<div class="a" style="left:182px;top:113px;width:534px;height:1px;background:#fafafa"></div>
<div class="a" style="left:182px;top:114px;width:533px;height:374px;background:#f0f0f0;border-top:1px solid #6a6a6a;border-left:1px solid #8a8a8a"></div>
<div class="a" style="left:183px;top:115px;width:532px;height:1px;background:#6a6a6a"></div>
<div class="a" style="left:183px;top:115px;width:1px;height:372px;background:#6a6a6a"></div>
<div id="code">
<div class="ln" style="top:16px"><span class="k">Public</span> <span class="k">WithEvents</span> SentItems <span class="k">As</span> Outlook.Items</div>
<div class="sep" style="top:32px"></div>
<div class="ln" style="top:32px"><span class="k">Private</span> <span class="k">Sub</span> Application_Startup()</div>
<div class="ln" style="top:48px">    <span class="k">Set</span> SentItems = Outlook.Application.Session.GetDefaultFolder(olFolderSentMail).Items</div>
<div class="ln" style="top:64px"><span class="k">End</span> <span class="k">Sub</span></div>
<div class="sep" style="top:80px"></div>
<div class="ln" style="top:80px"><span class="k">Private</span> <span class="k">Sub</span> SentItems_ItemAdd(<span class="k">ByVal</span> Item <span class="k">As</span> <span class="k">Object</span>)</div>
<div class="ln" style="top:96px"><span class="k">Dim</span> xMeetingItem <span class="k">As</span> Outlook.MeetingItem</div>
<div class="ln" style="top:112px"><span class="k">Dim</span> xMeetingItemAccepted <span class="k">As</span> Outlook.MeetingItem</div>
<div class="ln" style="top:128px"><span class="k">Dim</span> xAppointmentItem <span class="k">As</span> Outlook.AppointmentItem</div>
<div class="ln" style="top:144px"><span class="k">On</span> <span class="k">Error</span> <span class="k">Resume</span> <span class="k">Next</span></div>
<div class="ln" style="top:160px"><span class="k">If</span> <span class="k">TypeOf</span> Item <span class="k">Is</span> MeetingItem <span class="k">Then</span></div>
<div class="ln" style="top:176px">    <span class="k">Set</span> xMeetingItem = Item</div>
<div class="ln" style="top:192px">    <span class="k">If</span> InStr(xMeetingItem.Subject, "Accepted:") = 1 <span class="k">Then</span></div>
<div class="ln" style="top:208px">        <span class="k">Set</span> xMeetingItemAccepted = xMeetingItem</div>
<div class="ln" style="top:224px">        <span class="k">Set</span> xAppointmentItem = xMeetingItemAccepted.GetAssociatedAppointment(False)</div>
<div class="ln" style="top:240px">        <span class="k">With</span> xAppointmentItem</div>
<div class="ln" style="top:256px">            .Categories = .Categories &amp; "Red Category"</div>
<div class="ln" style="top:272px">            .Save</div>
<div class="ln" style="top:288px">        <span class="k">End</span> <span class="k">With</span></div>
<div class="ln" style="top:304px">    <span class="k">End</span> <span class="k">If</span></div>
<div class="ln" style="top:320px"><span class="k">End</span> <span class="k">If</span></div>
</div>
<!-- vscroll -->
<div class="a" style="left:695px;top:117px;width:17px;height:6px;background:#f8f8f8;border-bottom:1px solid #696969;border-right:1px solid #696969;border-top:1px solid #fff"></div>
<div class="a" style="left:696px;top:123px;width:16px;height:348px;background:#f0f0f0"></div>
<div class="a" style="left:696px;top:140px;width:16px;height:286px;background:#cdcdcd"></div>
<!-- bottom: view buttons + hscroll -->
<div class="a" style="left:184px;top:471px;width:528px;height:15px;background:#f0f0f0"></div>
<div class="a" style="left:184px;top:470px;width:18px;height:16px;background:#f0f0f0;border-left:1px solid #fafafa;border-top:1px solid #fafafa;border-right:2px solid #6a6a6a;border-bottom:2px solid #6a6a6a"></div>
<div class="a" style="left:187px;top:472px;width:10px;height:1px;background:#000;box-shadow:0 4px #000"></div>
<div class="a" style="left:190px;top:474px;width:7px;height:1px;background:#000"></div>
<div class="a" style="left:203px;top:471px;width:14px;height:14px;background:#f8f8f8"></div>
<div class="a" style="left:204px;top:473px;width:10px;height:1px;background:#000;box-shadow:0 4px #000,0 8px #000"></div>
<div class="a" style="left:207px;top:475px;width:7px;height:1px;background:#000;box-shadow:0 4px #000"></div>
<div class="a" style="left:235px;top:471px;width:26px;height:14px;background:#cdcdcd"></div>
<div class="a" style="left:707px;top:476px;width:2px;height:2px;background:#b0b0b0;box-shadow:-3px 3px #b0b0b0,0 3px #b0b0b0,-6px 6px #b0b0b0,-3px 6px #b0b0b0,0 6px #b0b0b0"></div>
<div class="a" style="left:183px;top:486px;width:530px;height:1px;background:#e3e3e3"></div><div class="a" style="left:182px;top:487px;width:532px;height:1px;background:#fff"></div>
<div class="a" style="left:712px;top:115px;width:1px;height:372px;background:#e3e3e3"></div><div class="a" style="left:713px;top:114px;width:1px;height:374px;background:#fff"></div>
<div class="a" style="left:714px;top:88px;width:1px;height:401px;background:#e3e3e3"></div><div class="a" style="left:715px;top:87px;width:1px;height:403px;background:#fff"></div>
<div class="a" style="left:180px;top:488px;width:536px;height:2px;background:#fff;border-top:1px solid #e3e3e3"></div>
<div class="a" style="left:4px;top:488px;width:176px;height:2px;background:#fff;border-top:1px solid #e3e3e3"></div>
<svg class="a" style="left:699.0px;top:129px" width="9" height="6"><path d="M1 4.8 L4.5 1.3 L8 4.8" fill="none" stroke="#5a5a5a" stroke-width="2.1"/></svg><svg class="a" style="left:699.0px;top:458.5px" width="9" height="6"><path d="M1 1.2 L4.5 4.7 L8 1.2" fill="none" stroke="#5a5a5a" stroke-width="2.1"/></svg><svg class="a" style="left:223px;top:473.5px" width="6" height="9"><path d="M4.8 1 L1.3 4.5 L4.8 8" fill="none" stroke="#5a5a5a" stroke-width="2.1"/></svg><svg class="a" style="left:685px;top:473.5px" width="6" height="9"><path d="M1.2 1 L4.7 4.5 L1.2 8" fill="none" stroke="#5a5a5a" stroke-width="2.1"/></svg><svg class="a" style="left:11px;top:475.0px" width="6" height="9"><path d="M4.8 1 L1.3 4.5 L4.8 8" fill="none" stroke="#5a5a5a" stroke-width="2.1"/></svg><svg class="a" style="left:161px;top:475.0px" width="6" height="9"><path d="M1.2 1 L4.7 4.5 L1.2 8" fill="none" stroke="#5a5a5a" stroke-width="2.1"/></svg>
<!-- red box -->
<div class="a" style="left:203px;top:115px;width:511px;height:356px;border:2px solid #ea6274"></div>
<svg class="a" style="left:0;top:0" width="722" height="497"><path d="M113.8 300 H165.5 Q164.5 291 160.5 286 Q172 295 182 303 Q172 311 160.5 320 Q164.5 315 165.5 306 H113.8 Z" fill="#ea6274"/></svg>
</body></html>
